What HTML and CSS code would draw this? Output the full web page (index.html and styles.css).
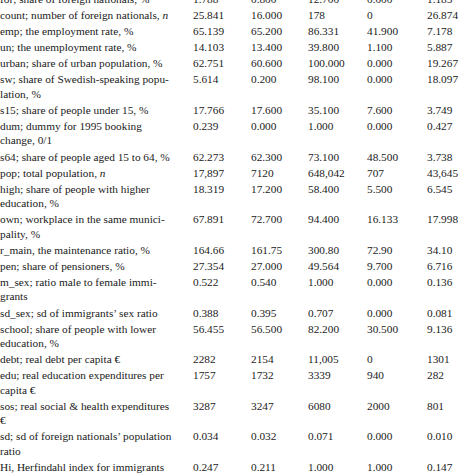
FILE: index.html
```html
<!DOCTYPE html>
<html>
<head>
<meta charset="utf-8">
<link rel="stylesheet" href="styles.css">
</head>
<body>
<table class="stats">
<colgroup>
<col class="c-label"><col class="c1"><col class="c2"><col class="c3"><col class="c4"><col class="c5">
</colgroup>
<tbody>
<tr><td>for; share of foreign nationals, %</td><td>1.788</td><td>0.800</td><td>12.700</td><td>0.000</td><td>1.185</td></tr>
<tr><td>count; number of foreign nationals, <i>n</i></td><td>25.841</td><td>16.000</td><td>178</td><td>0</td><td>26.874</td></tr>
<tr><td>emp; the employment rate, %</td><td>65.139</td><td>65.200</td><td>86.331</td><td>41.900</td><td>7.178</td></tr>
<tr><td>un; the unemployment rate, %</td><td>14.103</td><td>13.400</td><td>39.800</td><td>1.100</td><td>5.887</td></tr>
<tr><td>urban; share of urban population, %</td><td>62.751</td><td>60.600</td><td>100.000</td><td>0.000</td><td>19.267</td></tr>
<tr><td>sw; share of Swedish-speaking popu-<br>lation, %</td><td>5.614</td><td>0.200</td><td>98.100</td><td>0.000</td><td>18.097</td></tr>
<tr><td>s15; share of people under 15, %</td><td>17.766</td><td>17.600</td><td>35.100</td><td>7.600</td><td>3.749</td></tr>
<tr><td>dum; dummy for 1995 booking<br>change, 0/1</td><td>0.239</td><td>0.000</td><td>1.000</td><td>0.000</td><td>0.427</td></tr>
<tr><td>s64; share of people aged 15 to 64, %</td><td>62.273</td><td>62.300</td><td>73.100</td><td>48.500</td><td>3.738</td></tr>
<tr><td>pop; total population, <i>n</i></td><td>17,897</td><td>7120</td><td>648,042</td><td>707</td><td>43,645</td></tr>
<tr><td>high; share of people with higher<br>education, %</td><td>18.319</td><td>17.200</td><td>58.400</td><td>5.500</td><td>6.545</td></tr>
<tr><td>own; workplace in the same munici-<br>pality, %</td><td>67.891</td><td>72.700</td><td>94.400</td><td>16.133</td><td>17.998</td></tr>
<tr><td>r_main, the maintenance ratio, %</td><td>164.66</td><td>161.75</td><td>300.80</td><td>72.90</td><td>34.10</td></tr>
<tr><td>pen; share of pensioners, %</td><td>27.354</td><td>27.000</td><td>49.564</td><td>9.700</td><td>6.716</td></tr>
<tr><td>m_sex; ratio male to female immi-<br>grants</td><td>0.522</td><td>0.540</td><td>1.000</td><td>0.000</td><td>0.136</td></tr>
<tr><td>sd_sex; sd of immigrants’ sex ratio</td><td>0.388</td><td>0.395</td><td>0.707</td><td>0.000</td><td>0.081</td></tr>
<tr><td>school; share of people with lower<br>education, %</td><td>56.455</td><td>56.500</td><td>82.200</td><td>30.500</td><td>9.136</td></tr>
<tr><td>debt; real debt per capita €</td><td>2282</td><td>2154</td><td>11,005</td><td>0</td><td>1301</td></tr>
<tr><td>edu; real education expenditures per<br>capita €</td><td>1757</td><td>1732</td><td>3339</td><td>940</td><td>282</td></tr>
<tr><td>sos; real social &amp; health expenditures<br>€</td><td>3287</td><td>3247</td><td>6080</td><td>2000</td><td>801</td></tr>
<tr><td>sd; sd of foreign nationals’ population<br>ratio</td><td>0.034</td><td>0.032</td><td>0.071</td><td>0.000</td><td>0.010</td></tr>
<tr><td>Hi, Herfindahl index for immigrants</td><td>0.247</td><td>0.211</td><td>1.000</td><td>1.000</td><td>0.147</td></tr>
</tbody>
</table>
</body>
</html>
```
FILE: styles.css
```css
html, body {
  margin: 0;
  padding: 0;
  background: #ffffff;
  overflow: hidden;
}
body {
  font-family: "Liberation Serif", "Times New Roman", serif;
  font-size: 11.3px;
  color: #1a1a1a;
}
.stats {
  border-collapse: collapse;
  margin-top: -9.4px;
  table-layout: fixed;
  width: 490px;
}
.c-label { width: 193px; }
.c1 { width: 58px; }
.c2 { width: 57px; }
.c3 { width: 59px; }
.c4 { width: 60px; }
.c5 { width: 63px; }
.stats td {
  padding: 0.95px 0;
  line-height: 14.3px;
  vertical-align: top;
  white-space: nowrap;
  text-align: left;
}
```
